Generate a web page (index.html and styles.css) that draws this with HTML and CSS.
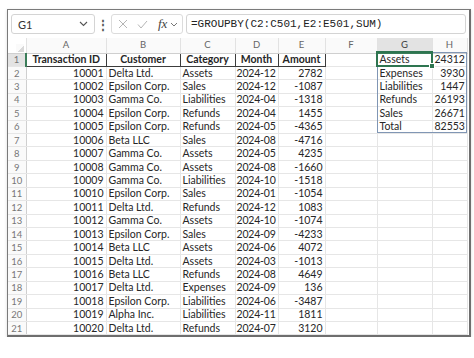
FILE: index.html
```html
<!DOCTYPE html>
<html lang="en">
<head>
    <meta charset="UTF-8">
    <meta name="viewport" content="width=device-width, initial-scale=1.0">
    <title>GROUPBY - Sheet1</title>
    <link rel="stylesheet" href="styles.css">
</head>
<body>
    <div class="frame">
        <div class="formula-bar">
            <div class="name-box">
                <span>G1</span>
                <svg class="chev" width="9" height="6" viewBox="0 0 9 6"><path d="M1 1l3.5 3.5L8 1" fill="none" stroke="#555" stroke-width="1.1"/></svg>
            </div>
            <div class="dots">&#8942;</div>
            <div class="fx-box">
                <svg width="10" height="10" viewBox="0 0 10 10"><path d="M1 1l8 8M9 1l-8 8" stroke="#b5b5b5" stroke-width="1"/></svg>
                <svg width="11" height="9" viewBox="0 0 11 9"><path d="M1 4.5l3 3.5L10 1" fill="none" stroke="#b5b5b5" stroke-width="1"/></svg>
                <span class="fx">fx</span>
                <svg width="8" height="5" viewBox="0 0 8 5"><path d="M1 1l3 3 3-3" fill="none" stroke="#777" stroke-width="1"/></svg>
            </div>
            <div class="formula">=GROUPBY(C2:C501,E2:E501,SUM)</div>
        </div>
        <div class="grid-wrap">
            <table class="grid">
                <colgroup>
                    <col style="width:18px"><col style="width:80px"><col style="width:74px"><col style="width:55px"><col style="width:43px"><col style="width:47px"><col style="width:52px"><col style="width:55px"><col style="width:35px">
                </colgroup>
                <thead>
                    <tr>
                        <th class="corner"></th>
                        <th>A</th><th>B</th><th>C</th><th>D</th><th>E</th><th>F</th><th class="sel-col">G</th><th>H</th>
                    </tr>
                </thead>
                <tbody id="rows">
                    <tr>
                        <td class="rn sel-row">1</td>
                        <td class="hd">Transaction ID</td><td class="hd">Customer</td><td class="hd">Category</td><td class="hd">Month</td><td class="hd">Amount</td>
                        <td></td><td>Assets</td><td class="num">24312</td>
                    </tr>
                </tbody>
            </table>
            <div class="spill"></div>
            <div class="active-cell"><span class="handle"></span></div>
        </div>
    </div>
    <script>
        const data = [
            [10001, 'Delta Ltd.', 'Assets', '2024-12', 2782],
            [10002, 'Epsilon Corp.', 'Sales', '2024-12', -1087],
            [10003, 'Gamma Co.', 'Liabilities', '2024-04', -1318],
            [10004, 'Epsilon Corp.', 'Refunds', '2024-04', 1455],
            [10005, 'Epsilon Corp.', 'Refunds', '2024-05', -4365],
            [10006, 'Beta LLC', 'Sales', '2024-08', -4716],
            [10007, 'Gamma Co.', 'Assets', '2024-05', 4235],
            [10008, 'Gamma Co.', 'Assets', '2024-08', -1660],
            [10009, 'Gamma Co.', 'Liabilities', '2024-10', -1518],
            [10010, 'Epsilon Corp.', 'Sales', '2024-01', -1054],
            [10011, 'Delta Ltd.', 'Refunds', '2024-12', 1083],
            [10012, 'Gamma Co.', 'Assets', '2024-10', -1074],
            [10013, 'Epsilon Corp.', 'Sales', '2024-09', -4233],
            [10014, 'Beta LLC', 'Assets', '2024-06', 4072],
            [10015, 'Delta Ltd.', 'Assets', '2024-03', -1013],
            [10016, 'Beta LLC', 'Refunds', '2024-08', 4649],
            [10017, 'Delta Ltd.', 'Expenses', '2024-09', 136],
            [10018, 'Epsilon Corp.', 'Liabilities', '2024-06', -3487],
            [10019, 'Alpha Inc.', 'Liabilities', '2024-11', 1811],
            [10020, 'Delta Ltd.', 'Refunds', '2024-07', 3120]
        ];
        // result of the GROUPBY spill, starting on row 2
        const groups = [
            ['Expenses', 3930],
            ['Liabilities', 1447],
            ['Refunds', 26193],
            ['Sales', 26671],
            ['Total', 82553]
        ];

        const tbody = document.getElementById('rows');
        data.forEach((row, i) => {
            const g = groups[i] || ['', ''];
            const tr = document.createElement('tr');
            tr.innerHTML =
                '<td class="rn">' + (i + 2) + '</td>' +
                '<td class="num">' + row[0] + '</td>' +
                '<td>' + row[1] + '</td>' +
                '<td>' + row[2] + '</td>' +
                '<td class="month">' + row[3] + '</td>' +
                '<td class="num">' + row[4] + '</td>' +
                '<td></td>' +
                '<td>' + g[0] + '</td>' +
                '<td class="num">' + g[1] + '</td>';
            tbody.appendChild(tr);
        });
    </script>
</body>
</html>
```
FILE: styles.css
```css
body, html {
    margin: 0;
    padding: 0;
    background-color: #fff;
    font-family: Lato, "Open Sans", sans-serif;
}

.frame {
    margin: 9px 0 0 7px;
    width: 461px;
    height: 325px;
    border: 1px solid #7a7a7a;
    border-right: 2px solid #6e6e6e;
    border-bottom: 2px solid #6e6e6e;
    background-color: #fff;
    box-shadow: 0 1px 3px rgba(0,0,0,0.15);
    overflow: hidden;
}

/* formula bar */
.formula-bar {
    display: flex;
    align-items: center;
    height: 28px;
    padding: 0 3px 0 3px;
    box-sizing: border-box;
}

.name-box {
    display: flex;
    align-items: center;
    justify-content: space-between;
    width: 84px;
    height: 20px;
    box-sizing: border-box;
    border: 1px solid #d4d4d4;
    border-radius: 3px;
    padding: 0 6px 0 6px;
    font-size: 11px;
    color: #333;
}

.dots {
    width: 16px;
    text-align: center;
    font-size: 12px;
    color: #555;
    font-weight: bold;
}

.fx-box {
    display: flex;
    align-items: center;
    gap: 9px;
    width: 72px;
    height: 20px;
    box-sizing: border-box;
    border: 1px solid #dcdcdc;
    border-radius: 3px;
    padding: 0 3px 0 6px;
}

.fx {
    font-family: "Liberation Serif", serif;
    font-style: italic;
    font-size: 13px;
    color: #444;
    margin-left: 1px;
    margin-right: -6px;
}

.formula {
    flex: 1;
    height: 20px;
    margin-left: 3px;
    box-sizing: border-box;
    border: 1px solid #d4d4d4;
    border-radius: 3px;
    padding: 0 4px;
    font-family: "Liberation Mono", monospace;
    font-size: 11px;
    line-height: 18px;
    color: #222;
}

/* grid */
.grid-wrap {
    position: relative;
}

.grid {
    border-collapse: collapse;
    table-layout: fixed;
    width: 459px;
    font-size: 10.5px;
    color: #262626;
}

.grid th {
    height: 14px;
    padding: 0;
    font-weight: normal;
    font-size: 9.5px;
    line-height: 12px;
    color: #666;
    background-color: #fafafa;
    border-right: 1px solid #e2e2e2;
    border-bottom: 1px solid #cfcfcf;
}

.grid th.corner {
    background: linear-gradient(135deg, #fafafa 60%, #d9d9d9 61%);
    background-size: 8px 8px;
    background-repeat: no-repeat;
    background-position: right 2px bottom 1px;
}

.grid th.sel-col {
    background-color: #e3e3e3;
    border-bottom: 2px solid #3a7d59;
    color: #3b3b3b;
}

.grid tbody tr {
    height: 13.43px;
}

.grid td {
    padding: 0 2px;
    line-height: 11px;
    white-space: nowrap;
    overflow: hidden;
    border-right: 1px solid #e6e6e6;
    border-bottom: 1px solid #e6e6e6;
}

.grid td.rn {
    padding: 0;
    text-align: center;
    font-size: 9.5px;
    color: #777;
    background-color: #fafafa;
    border-right: 1px solid #cfcfcf;
}

.grid td.sel-row {
    background-color: #e3e3e3;
    border-right: 2px solid #3a7d59;
}

.grid td.hd {
    font-weight: bold;
    text-align: center;
    border: 1px solid #3c3c3c;
}

.grid td.month {
    padding: 0 1px;
    letter-spacing: -0.2px;
}

.grid td.num {
    text-align: right;
}

/* spill outline and active cell sit over the grid */
.spill {
    position: absolute;
    left: 369px;
    top: 14px;
    width: 90px;
    height: 81px;
    border: 1px solid #8096b4;
    box-sizing: border-box;
}

.active-cell {
    position: absolute;
    left: 368px;
    top: 13px;
    width: 57px;
    height: 16px;
    border: 2px solid #2e7550;
    box-sizing: border-box;
}

.handle {
    position: absolute;
    right: -4px;
    bottom: -4px;
    width: 4px;
    height: 4px;
    background-color: #2e7550;
    border: 1px solid #fff;
}
```
